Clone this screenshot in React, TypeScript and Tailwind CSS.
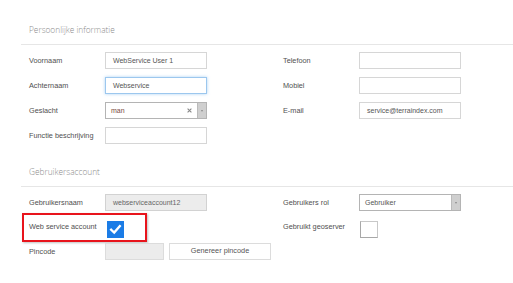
const FIELD = "h-[17px] w-[102px] border border-[#d6d6d6] bg-white px-[7px] text-[7px] leading-[15px] text-[#555]";

function Label({ children }: { children: React.ReactNode }) {
  return <span className="w-[76px] shrink-0 text-[7.3px] leading-[12px] text-[#505050]">{children}</span>;
}

function SelectBox({ value, clearable, valueClass }: { value: string; clearable?: boolean; valueClass?: string }) {
  return (
    <div className="flex h-[17px] w-[102px] items-stretch border border-[#b4b4b4] bg-white">
      <span className={"flex-1 pl-[5px] text-[7px] leading-[15px] " + (valueClass ?? "text-[#555]")}>{value}</span>
      {clearable && (
        <span className="flex items-center pr-[5px]">
          <svg width="5" height="5" viewBox="0 0 5 5">
            <path d="M0.6 0.6 L4.4 4.4 M4.4 0.6 L0.6 4.4" stroke="#888" strokeWidth="1.1" />
          </svg>
        </span>
      )}
      <span className="flex w-[9px] items-center justify-center border-l border-[#bbb] bg-[#cfcfcf]">
        <span className="h-0 w-0 border-x-[1.5px] border-t-[2px] border-x-transparent border-t-[#8a8a8a]" />
      </span>
    </div>
  );
}

function Heading({ children }: { children: React.ReactNode }) {
  return (
    <div className="border-b border-[#e6e6e6] pb-[7px] pl-2 font-['Open_Sans',sans-serif] text-[8.3px] font-light leading-[14px] text-[#8c8c8c]">
      {children}
    </div>
  );
}

function Row({ left, right, className }: { left: React.ReactNode; right?: React.ReactNode; className?: string }) {
  return (
    <div className={"relative flex pl-2 " + (className ?? "")}>
      <div className="flex w-[254px] items-center">{left}</div>
      {right && <div className="flex items-center">{right}</div>}
    </div>
  );
}

export default function App() {
  return (
    <div className="h-[283px] w-[513px] overflow-hidden bg-white pl-[21px] pt-[23px] font-['Liberation_Sans',Arial,sans-serif]">
      <Heading>Persoonlijke informatie</Heading>

      <div className="flex flex-col gap-y-[8px] pt-[7px]">
        <Row
          left={<><Label>Voornaam</Label><div className={FIELD}>WebService User 1</div></>}
          right={<><Label>Telefoon</Label><div className={FIELD} /></>}
        />
        <Row
          left={
            <>
              <Label>Achternaam</Label>
              <div className="h-[17px] w-[102px] border border-[#9cc7ee] bg-white px-[7px] text-[7px] leading-[15px] text-[#555] shadow-[0_0_3px_rgba(102,175,233,0.55)]">
                Webservice
              </div>
            </>
          }
          right={<><Label>Mobiel</Label><div className={FIELD} /></>}
        />
        <Row
          left={<><Label>Geslacht</Label><SelectBox value="man" clearable valueClass="text-[#7a4a42]" /></>}
          right={<><Label>E-mail</Label><div className={FIELD}>service@terraindex.com</div></>}
        />
        <Row left={<><Label>Functie beschrijving</Label><div className={FIELD} /></>} />
      </div>

      <div className="mt-[21px]">
        <Heading>Gebruikersaccount</Heading>
      </div>

      <Row
        className="mt-[7px]"
        left={
          <>
            <Label>Gebruikersnaam</Label>
            <div className="h-[17px] w-[102px] border border-[#d2d2d2] bg-[#ececec] px-[7px] text-[7px] leading-[15px] text-[#666]">
              webserviceaccount12
            </div>
          </>
        }
        right={<><Label>Gebruikers rol</Label><SelectBox value="Gebruiker" /></>}
      />

      <div className="relative mt-[10px] flex pl-2">
        <div className="flex w-[254px] items-start">
          <span className="w-[78px] shrink-0 text-[7.3px] leading-[12px] text-[#505050]">Web service account</span>
          <span className="flex h-[17px] w-[17px] items-center justify-center bg-[#1b7ce6]">
            <svg width="13" height="13" viewBox="0 0 13 13" fill="none">
              <path d="M2.2 6.8 L5.2 9.6 L10.8 3.2" stroke="white" strokeWidth="2.4" strokeLinecap="square" />
            </svg>
          </span>
        </div>
        <div className="flex items-start">
          <span className="w-[77px] shrink-0 text-[7.3px] leading-[12px] text-[#505050]">Gebruikt geoserver</span>
          <span className="h-[17px] w-[18px] border border-[#a8a8a8] border-r-[#c8c8c8] border-t-[#c8c8c8] bg-white" />
        </div>
        <div className="pointer-events-none absolute left-[1px] top-[-8px] h-[29px] w-[125px] border-2 border-[#e8141c] shadow-[1px_1px_2px_rgba(0,0,0,0.25)]" />
      </div>

      <Row
        className="mt-[5px]"
        left={
          <>
            <Label>Pincode</Label>
            <div className="h-[17px] w-[59px] border border-[#dcdcdc] bg-[#ececec]" />
            <div className="ml-[5px] flex h-[17px] w-[102px] items-center justify-center border border-[#dcdcdc] bg-white text-[7.3px] text-[#555]">
              Genereer pincode
            </div>
          </>
        }
      />
    </div>
  );
}
